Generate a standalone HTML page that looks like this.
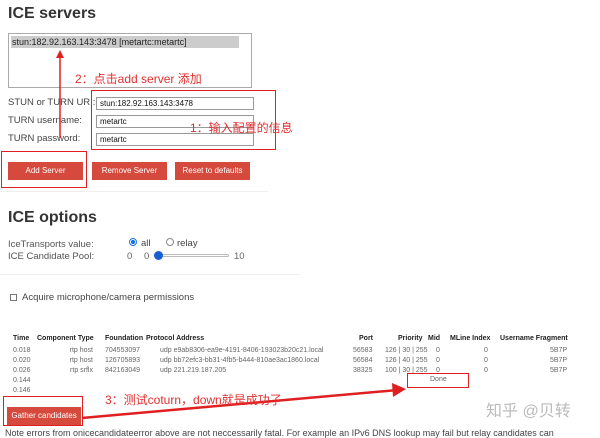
<!DOCTYPE html>
<html><head><meta charset="utf-8"><style>
*{margin:0;padding:0;box-sizing:border-box}
body{width:600px;height:433px;overflow:hidden;background:#fff;font-family:"Liberation Sans","Noto Sans CJK SC",sans-serif;color:#333;position:relative}
.a{position:absolute;white-space:nowrap}
h2{position:absolute;font-size:16px;font-weight:bold;color:#333}
.lbl{font-size:9.5px;color:#444}
.inp{position:absolute;border:1px solid #999;height:13px;font-size:8px;padding-left:3px;line-height:11px;color:#111;width:158px;left:96px}
.btn{position:absolute;background:#d54a3d;color:#fff;font-size:8px;text-align:center;line-height:18px;height:18px}
.red{position:absolute;border:1.5px solid #e02020}
.rt{color:#e03030;font-size:12px}
.t{font-size:7px;color:#666}
.th{font-size:7px;color:#222;font-weight:bold}
</style></head><body>
<h2 style="left:8px;top:5px">ICE servers</h2>
<div class="a" style="left:8px;top:33px;width:244px;height:55px;border:1px solid #aaa"></div>
<div class="a" style="left:11px;top:36px;width:228px;height:12px;background:#ccc;font-size:9px;line-height:12px;padding-left:1px;color:#222">stun:182.92.163.143:3478 [metartc:metartc]</div>
<div class="a rt" style="left:75px;top:70px">2：点击add server 添加</div>
<div class="a lbl" style="left:8px;top:97px">STUN or TURN URI:</div>
<div class="a lbl" style="left:8px;top:115px">TURN username:</div>
<div class="a lbl" style="left:8px;top:133px">TURN password:</div>
<div class="inp" style="top:97px">stun:182.92.163.143:3478</div>
<div class="inp" style="top:115px">metartc</div>
<div class="inp" style="top:133px">metartc</div>
<div class="red" style="left:91px;top:90px;width:185px;height:60px"></div>
<div class="a rt" style="left:190px;top:119px">1：输入配置的信息</div>
<svg class="a" style="left:55px;top:50px" width="10" height="90"><line x1="5" y1="88" x2="5" y2="6" stroke="#e02020" stroke-width="1.5"/><polygon points="1,8 5,0 9,8" fill="#e02020"/></svg>
<div class="red" style="left:1px;top:151px;width:86px;height:37px"></div>
<div class="btn" style="left:8px;top:162px;width:75px">Add Server</div>
<div class="btn" style="left:92px;top:162px;width:75px">Remove Server</div>
<div class="btn" style="left:175px;top:162px;width:75px">Reset to defaults</div>
<div class="a" style="left:0;top:191px;width:268px;height:1px;background:#eee"></div>
<h2 style="left:8px;top:209px">ICE options</h2>
<div class="a lbl" style="left:8px;top:239px;color:#555">IceTransports value:</div>
<div class="a lbl" style="left:8px;top:251px;color:#555">ICE Candidate Pool:</div>
<div class="a" style="left:129px;top:238px;width:8px;height:8px;border-radius:50%;border:1px solid #1a73e8;background:radial-gradient(#1a73e8 45%,#fff 55%)"></div>
<div class="a lbl" style="left:141px;top:238px">all</div>
<div class="a" style="left:166px;top:238px;width:8px;height:8px;border-radius:50%;border:1px solid #888"></div>
<div class="a lbl" style="left:177px;top:238px">relay</div>
<div class="a lbl" style="left:127px;top:251px;color:#666">0</div>
<div class="a lbl" style="left:144px;top:251px;color:#666">0</div>
<div class="a" style="left:157px;top:254px;width:72px;height:3px;border:1px solid #bbb;border-radius:2px"></div>
<div class="a" style="left:154px;top:251px;width:9px;height:9px;border-radius:50%;background:#1a5fd0"></div>
<div class="a lbl" style="left:234px;top:251px;color:#666">10</div>
<div class="a" style="left:0;top:274px;width:300px;height:1px;background:#eee"></div>
<div class="a" style="left:10px;top:294px;width:7px;height:7px;border:1px solid #777"></div>
<div class="a lbl" style="left:22px;top:292px">Acquire microphone/camera permissions</div>
<div class="a th" style="left:13px;top:335px">Time</div>
<div class="a th" style="left:37px;top:335px">Component Type</div>
<div class="a th" style="left:105px;top:335px">Foundation</div>
<div class="a th" style="left:146px;top:335px">Protocol Address</div>
<div class="a th" style="left:359px;top:335px">Port</div>
<div class="a th" style="left:398px;top:335px">Priority</div>
<div class="a th" style="left:428px;top:335px">Mid</div>
<div class="a th" style="left:450px;top:335px">MLine Index</div>
<div class="a th" style="left:500px;top:335px">Username Fragment</div>
<div class="a t" style="left:13px;top:346px;line-height:10px">0.018<br>0.020<br>0.026<br>0.144<br>0.146</div>
<div class="a t" style="left:63px;top:346px;line-height:10px;text-align:right;width:30px">rtp host<br>rtp host<br>rtp srflx</div>
<div class="a t" style="left:105px;top:346px;line-height:10px">704553097<br>126705893<br>842163049</div>
<div class="a t" style="left:160px;top:346px;line-height:10px">udp e9ab8306-ea9e-4191-8406-193023b20c21.local<br>udp bb72efc3-bb31-4fb5-b444-810ae3ac1860.local<br>udp 221.219.187.205</div>
<div class="a t" style="left:353px;top:346px;line-height:10px">56583<br>56584<br>38325</div>
<div class="a t" style="left:385px;top:346px;line-height:10px">126 | 30 | 255<br>126 | 40 | 255<br>100 | 30 | 255</div>
<div class="a t" style="left:436px;top:346px;line-height:10px">0<br>0<br>0</div>
<div class="a t" style="left:484px;top:346px;line-height:10px">0<br>0<br>0</div>
<div class="a t" style="left:550px;top:346px;line-height:10px">5B7P<br>5B7P<br>5B7P</div>
<div class="red" style="left:407px;top:373px;width:62px;height:15px"></div>
<div class="a t" style="left:430px;top:376px">Done</div>
<svg class="a" style="left:80px;top:380px" width="330" height="40"><line x1="2" y1="38" x2="318" y2="10" stroke="#e02020" stroke-width="2.5"/><polygon points="312,3 326,9 313,17" fill="#e02020"/></svg>
<div class="a rt" style="left:105px;top:391px">3：测试coturn，down就是成功了</div>
<div class="red" style="left:3px;top:396px;width:80px;height:30px"></div>
<div class="btn" style="left:7px;top:407px;width:74px">Gather candidates</div>
<div class="a" style="left:486px;top:397px;font-size:16px;color:#bbb">知乎 @贝转</div>
<div class="a" style="left:5px;top:428px;font-size:9px;color:#444">Note errors from onicecandidateerror above are not neccessarily fatal. For example an IPv6 DNS lookup may fail but relay candidates can</div>
</body></html>
